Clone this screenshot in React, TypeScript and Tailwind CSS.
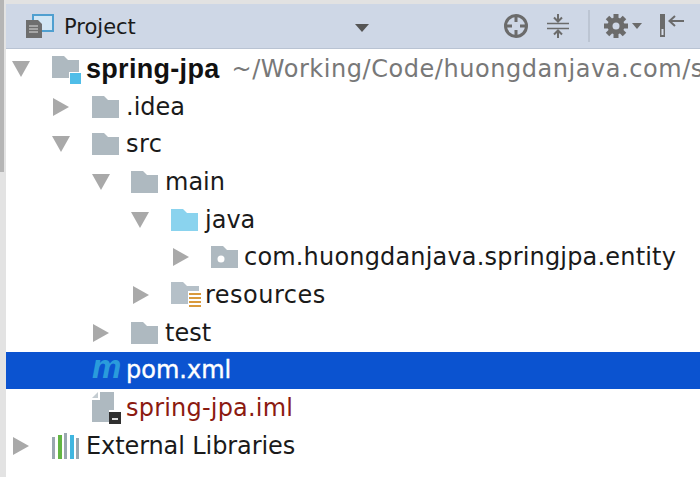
import type { ReactNode } from 'react'

const Arrow = ({ open }: { open: boolean }) => (
	<svg width="18" height="18" viewBox="0 0 18 18" className="shrink-0">
		{open ? <path d="M0 1H18L9 17Z" fill="#a9a9a9" /> : <path d="M1 0L17 9L1 18Z" fill="#a9a9a9" />}
	</svg>
)

const Folder = ({ color = '#aeb9c0', children }: { color?: string; children?: ReactNode }) => (
	<svg width="30" height="26" viewBox="0 0 30 26" className="block">
		<path d="M0 2H12L16 6H27V24H0Z" fill={color} />
		{children}
	</svg>
)

const ProjectIcon = () => (
	<svg width="30" height="30" viewBox="0 0 30 30" className="block">
		<path d="M0 2H12L16 6H27V24H0Z" fill="#aeb9c0" />
		<rect x="17" y="18" width="12" height="12" fill="#fff" />
		<rect x="18" y="19" width="11" height="11" fill="#4fbde8" />
	</svg>
)

const ResourcesIcon = () => (
	<svg width="32" height="28" viewBox="0 0 32 28" className="block">
		<path d="M0 1H12L16 5H28V23H0Z" fill="#b5c0c8" />
		<rect x="17" y="10" width="14" height="18" fill="#fff" />
		<path d="M18 13H30M18 17H30M18 21H30M18 25H30" stroke="#d99a3d" strokeWidth="2" />
	</svg>
)

const ImlIcon = () => (
	<svg width="30" height="32" viewBox="0 0 30 32" className="block">
		<path d="M8 0H22V18H17V30H0V8H8Z" fill="#aeb9c0" />
		<path d="M6 0V6H0Z" fill="#c4ccd1" />
		<rect x="17" y="20" width="12" height="12" fill="#2f2f2f" />
		<rect x="20" y="26" width="6" height="2" fill="#ddd" />
	</svg>
)

const LibrariesIcon = () => (
	<svg width="30" height="28" viewBox="0 0 30 28" className="block">
		<rect x="0" y="5" width="3" height="22" fill="#9aa7b0" />
		<rect x="6" y="3" width="4" height="24" fill="#62b543" />
		<rect x="12" y="1" width="3" height="26" fill="#9aa7b0" />
		<rect x="18" y="3" width="4" height="24" fill="#40b6e0" />
		<rect x="24" y="6" width="3" height="21" fill="#9aa7b0" />
	</svg>
)

const GearIcon = () => (
	<svg width="24" height="24" viewBox="0 0 24 24">
		{[0, 45, 90, 135].map((a) => (
			<rect key={a} x="9.500" y="0" width="5" height="24" fill="#6b6b6b" transform={`rotate(${a} 12 12)`} />
		))}
		<circle cx="12" cy="12" r="8.500" fill="#6b6b6b" />
		<circle cx="12" cy="12" r="3.500" fill="#ced7e6" />
	</svg>
)

const rows = [
	{ pad: 'pl-[46px]', box: 'w-[40px]', textBox: 'w-[34px]', open: false, icon: <Folder />, label: '.idea', cls: '' },
	{ pad: 'pl-[46px]', box: 'w-[40px]', textBox: 'w-[34px]', open: true, icon: <Folder />, label: 'src', cls: 'tracking-[0.4px]' },
	{ pad: 'pl-[86px]', box: 'w-[39px]', textBox: 'w-[34px]', open: true, icon: <Folder />, label: 'main', cls: '' },
	{ pad: 'pl-[125px]', box: 'w-[40px]', textBox: 'w-[34px]', open: true, icon: <Folder color="#8ad3ee" />, label: 'java', cls: '' },
	{
		pad: 'pl-[166px]',
		box: 'w-[39px]',
		textBox: 'w-[33px]',
		open: false,
		icon: (
			<Folder>
				<circle cx="10" cy="15" r="3.500" fill="#fff" />
			</Folder>
		),
		label: 'com.huongdanjava.springjpa.entity',
		cls: 'tracking-[0.18px]',
	},
	{ pad: 'pl-[126px]', box: 'w-[39px]', textBox: 'w-[34px]', open: false, icon: <ResourcesIcon />, label: 'resources', cls: 'tracking-[0.5px]' },
	{ pad: 'pl-[86px]', box: 'w-[39px]', textBox: 'w-[34px]', open: false, icon: <Folder />, label: 'test', cls: '' },
]

function Row({ pad, children, cls = '' }: { pad: string; children: ReactNode; cls?: string }) {
	return <div className={`flex h-[37.7px] items-center whitespace-nowrap ${pad} ${cls}`}>{children}</div>
}

export default function App() {
	return (
		<div className="flex h-[477px] w-[700px] overflow-hidden bg-white font-['DejaVu_Sans',sans-serif] text-[24px] text-[#1a1a1a]">
			{/* left edge + scrollbar */}
			<div className="w-[6px] shrink-0 bg-[#e3e3e3]">
				<div className="h-[172px] w-[4px] bg-[#b5b5b5]" />
			</div>

			<div className="min-w-0 flex-1">
				<div className="h-[4px] bg-[#e2e2e2]" />
				<div className="flex h-[45px] items-center border-b border-[#b9c3d3] bg-[#ced7e6] pl-[20px] pr-[15px]">
					<svg width="28" height="24" viewBox="0 0 28 24" className="shrink-0">
						<rect x="7" y="1" width="20" height="16" fill="#d2e6f4" stroke="#4f9fd0" strokeWidth="2" />
						<path d="M0 6H12L16 10V24H0Z" fill="#6e6e6e" />
						<path d="M3 12H12M3 15H12M3 18H12" stroke="#ddd" strokeWidth="1" />
					</svg>
					<span className="ml-[10px] mt-[3px] text-[21px]">Project</span>
					<svg width="14" height="8" viewBox="0 0 14 8" className="ml-[219px] mt-[3px] shrink-0">
						<path d="M0 0H14L7 8Z" fill="#555" />
					</svg>
					<div className="ml-auto flex items-center">
						<svg width="26" height="26" viewBox="0 0 26 26">
							<circle cx="13" cy="13" r="10.500" fill="none" stroke="#6b6b6b" strokeWidth="3" />
							<path d="M13 2V9M13 17V24M2 13H9M17 13H24" stroke="#6b6b6b" strokeWidth="3" />
						</svg>
						<svg width="24" height="26" viewBox="0 0 24 26" className="ml-[17px]">
							<path d="M1 10.500H23M1 15.500H23" stroke="#6b6b6b" strokeWidth="1.500" />
							<path d="M12 1V7M8 4.500L12 8.500L16 4.500M12 25V19M8 21.500L12 17.500L16 21.500" fill="none" stroke="#6b6b6b" strokeWidth="2" />
						</svg>
						<div className="ml-[18px] h-[32px] w-[2px] bg-[#bcc5d3]" />
						<div className="ml-[14px] flex"><GearIcon /></div>
						<svg width="10" height="6" viewBox="0 0 10 6" className="ml-[4px]">
							<path d="M0 0H10L5 6Z" fill="#6b6b6b" />
						</svg>
						<svg width="26" height="26" viewBox="0 0 26 26" className="ml-[17px]">
							<rect x="1" y="1" width="5" height="23" fill="#6b6b6b" />
							<rect x="2.500" y="16" width="2" height="6" fill="#d7deea" />
							<path d="M25 8H11M16 3L10.500 8L16 13" fill="none" stroke="#6b6b6b" strokeWidth="2" />
						</svg>
					</div>
				</div>

				<div className="pt-[1px]">
					<Row pad="pl-[6px]">
						<div className="flex w-[40px] shrink-0"><Arrow open /></div>
						<div className="w-[34px] shrink-0"><ProjectIcon /></div>
						<span className="font-['Liberation_Sans',sans-serif] text-[27px] font-bold tracking-[0.3px] text-[#111]">spring-jpa</span>
						<span className="ml-[12px] tracking-[0.55px] text-[#787878]">~/Working/Code/huongdanjava.com/s</span>
					</Row>
					{rows.map((r) => (
						<Row key={r.label} pad={r.pad}>
							<div className={`flex shrink-0 ${r.box}`}><Arrow open={r.open} /></div>
							<div className={`shrink-0 ${r.textBox}`}>{r.icon}</div>
							<span className={r.cls}>{r.label}</span>
						</Row>
					))}

					<Row pad="pl-[86px]" cls="bg-[#0b53d0] text-white">
						<div className="w-[34px] shrink-0">
							<span className="-mt-[6px] block w-[30px] font-['Liberation_Sans',sans-serif] text-[33px] leading-[26px] font-bold italic text-[#2a9bdc]">m</span>
						</div>
						<span className="[-webkit-text-stroke:0.4px_white]">pom.xml</span>
					</Row>
					<Row pad="pl-[86px]" cls="text-[#8b1a10]">
						<div className="w-[34px] shrink-0"><ImlIcon /></div>
						<span className="tracking-[0.2px]">spring-jpa.iml</span>
					</Row>
					<Row pad="pl-[6px]">
						<div className="w-[40px] shrink-0"><Arrow open={false} /></div>
						<div className="w-[34px] shrink-0"><LibrariesIcon /></div>
						<span className="tracking-[-0.1px]">External Libraries</span>
					</Row>
				</div>
			</div>
		</div>
	)
}
